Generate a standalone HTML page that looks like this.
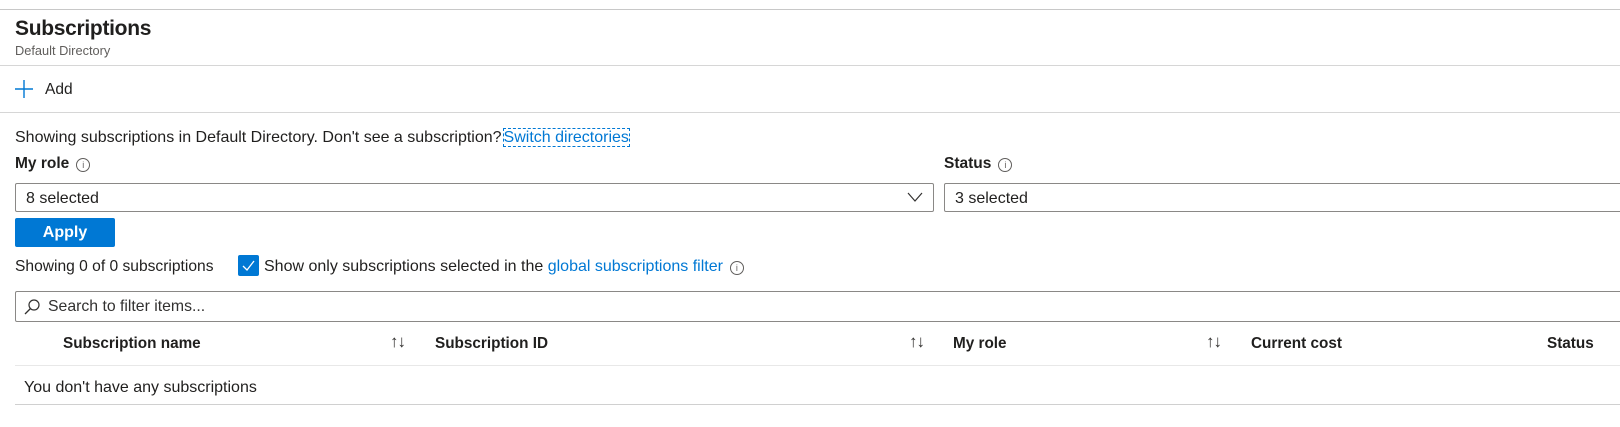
<!DOCTYPE html>
<html><head><style>
*{margin:0;padding:0;box-sizing:border-box}
body{width:1620px;height:427px;overflow:hidden;background:#fff;font-family:"Liberation Sans",sans-serif;color:#201f1e;font-size:16px;position:relative}
.a{position:absolute;white-space:nowrap}
.hl{position:absolute;left:0;right:0;height:1px;background:#d6d6d6}
.box{position:absolute;border:1px solid #8a8886;border-radius:2px;height:29px}
.info{display:inline-block;width:14px;height:14px;border:1px solid #605e5c;border-radius:50%;font-size:9px;text-align:center;line-height:12px;color:#605e5c;vertical-align:0px;margin-left:7px}
.th{font-weight:bold;top:335px;font-size:15.3px}
.ar{top:332px;font-size:17px;color:#323130;letter-spacing:-1px}
</style></head><body>
<div class="hl" style="top:9px;background:#c8c8c8"></div>
<div class="a" style="left:15px;top:17px;font-size:21px;font-weight:bold;letter-spacing:-0.3px">Subscriptions</div>
<div class="a" style="left:15px;top:43px;font-size:12.8px;color:#605e5c">Default Directory</div>
<div class="hl" style="top:65px"></div>
<svg class="a" style="left:15px;top:80px" width="18" height="18"><path d="M9 0V18M0 9H18" stroke="#0078d4" stroke-width="1.4"/></svg>
<div class="a" style="left:45px;top:81px;font-size:15.5px">Add</div>
<div class="hl" style="top:112px"></div>
<div class="a" style="left:15px;top:129px">Showing subscriptions in Default Directory. Don't see a subscription?<span style="color:#0078d4;outline:1px dashed #0078d4;margin-left:2px">Switch directories</span></div>
<div class="a" style="left:15px;top:155px;font-weight:bold;font-size:15.5px">My role<span class="info" style="font-weight:normal">i</span></div>
<div class="a" style="left:944px;top:155px;font-weight:bold;font-size:15.5px">Status<span class="info" style="font-weight:normal">i</span></div>
<div class="box" style="left:15px;top:183px;width:919px"><span class="a" style="left:10px;top:6px">8 selected</span>
<svg class="a" style="right:10px;top:8px" width="16" height="10"><path d="M1 1L8 9L15 1" fill="none" stroke="#323130" stroke-width="1.2"/></svg></div>
<div class="box" style="left:944px;top:183px;width:700px"><span class="a" style="left:10px;top:6px">3 selected</span></div>
<div class="a" style="left:15px;top:218px;width:100px;height:29px;background:#0078d4;border-radius:2px;color:#fff;font-weight:bold;text-align:center;line-height:29px">Apply</div>
<div class="a" style="left:15px;top:258px;font-size:15.6px">Showing 0 of 0 subscriptions</div>
<div class="a" style="left:238px;top:255px;width:21px;height:21px;background:#0078d4;border-radius:2px"><svg width="21" height="21"><path d="M5 11L9 15L16 6" fill="none" stroke="#fff" stroke-width="1.3"/></svg></div>
<div class="a" style="left:264px;top:258px">Show only subscriptions selected in the <span style="color:#0078d4">global subscriptions filter</span><span class="info">i</span></div>
<div class="box" style="left:15px;top:291px;width:1640px;height:31px">
<svg class="a" style="left:8px;top:7px" width="16" height="16"><circle cx="10" cy="6" r="5" fill="none" stroke="#323130" stroke-width="1.2"/><path d="M6.5 9.5L1 15" stroke="#323130" stroke-width="1.3"/></svg>
<span class="a" style="left:32px;top:6px;color:#323130;font-size:15.8px">Search to filter items...</span></div>
<div class="a th" style="left:63px">Subscription name</div>
<div class="a ar" style="left:390px">↑↓</div>
<div class="a th" style="left:435px">Subscription ID</div>
<div class="a ar" style="left:909px">↑↓</div>
<div class="a th" style="left:953px">My role</div>
<div class="a ar" style="left:1206px">↑↓</div>
<div class="a th" style="left:1251px">Current cost</div>
<div class="a th" style="left:1547px">Status</div>
<div class="hl" style="top:365px;left:15px;background:#e8e8e8"></div>
<div class="a" style="left:24px;top:379px">You don't have any subscriptions</div>
<div class="hl" style="top:404px;left:15px;background:#d0d0d0"></div>
</body></html>
